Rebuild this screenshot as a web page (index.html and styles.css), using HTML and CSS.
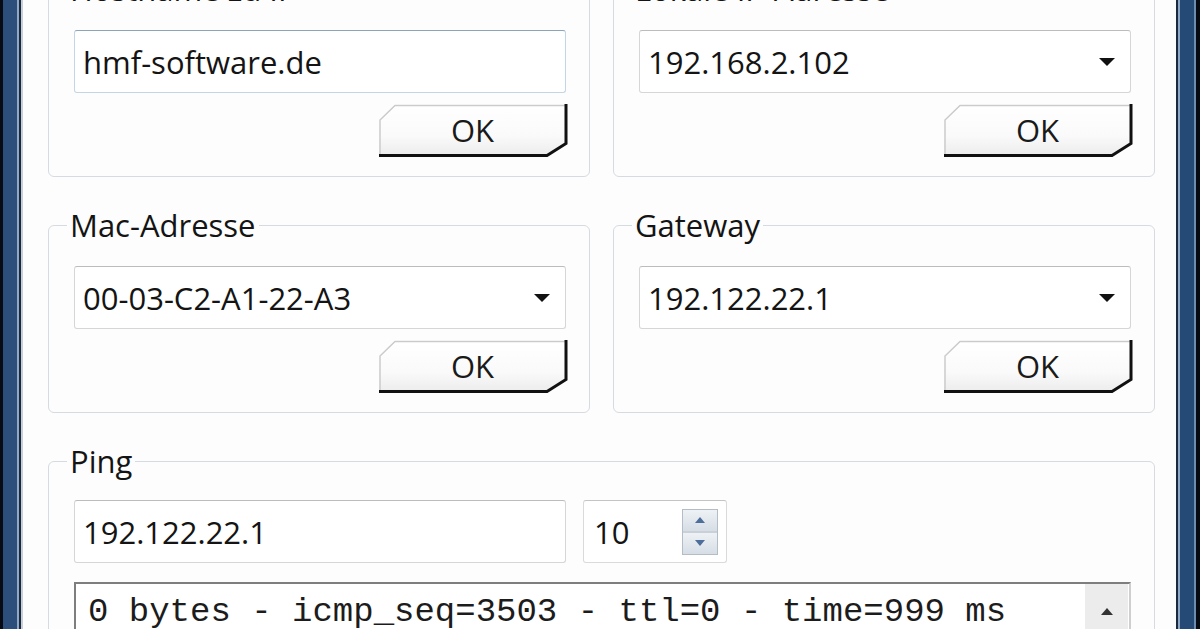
FILE: index.html
```html
<!DOCTYPE html>
<html lang="de">
<head>
<meta charset="utf-8">
<title>Netzwerk</title>
<link rel="stylesheet" href="styles.css">
</head>
<body>
<div class="window">
  <div class="frame frame-left"></div>
  <main class="client">
    <div class="grid">
      <fieldset class="group">
        <legend>Hostname zu IP</legend>
        <div class="field edit focus">hmf-software.de</div>
        <div class="actions">
          <button class="ok" type="button">
            <svg class="ok-shape" viewBox="0 0 189 53"><defs><linearGradient id="g1" x1="0" y1="0" x2="0" y2="1"><stop offset="0" stop-color="#ffffff"/><stop offset="0.6" stop-color="#fafafa"/><stop offset="1" stop-color="#ebebeb"/></linearGradient></defs><polygon points="0,16 16,0 189,0 189,40 168,53 0,53" fill="url(#g1)"/><polyline points="1,53 1,16 16,1.5 186,1.5" fill="none" stroke="#cbcbcb" stroke-width="1.5"/><polyline points="187,0 187,39.5 168,51.5 0,51.5" fill="none" stroke="#111" stroke-width="3"/></svg>
            <span>OK</span>
          </button>
        </div>
      </fieldset>
      <fieldset class="group">
        <legend>Lokale IP-Adresse</legend>
        <div class="field combo"><span>192.168.2.102</span><svg class="drop" viewBox="0 0 16 8"><polygon points="0,0 16,0 8,8" fill="#111"/></svg></div>
        <div class="actions">
          <button class="ok" type="button">
            <svg class="ok-shape" viewBox="0 0 189 53"><polygon points="0,16 16,0 189,0 189,40 168,53 0,53" fill="url(#g1)"/><polyline points="1,53 1,16 16,1.5 186,1.5" fill="none" stroke="#cbcbcb" stroke-width="1.5"/><polyline points="187,0 187,39.5 168,51.5 0,51.5" fill="none" stroke="#111" stroke-width="3"/></svg>
            <span>OK</span>
          </button>
        </div>
      </fieldset>
      <fieldset class="group">
        <legend>Mac-Adresse</legend>
        <div class="field combo"><span>00-03-C2-A1-22-A3</span><svg class="drop" viewBox="0 0 16 8"><polygon points="0,0 16,0 8,8" fill="#111"/></svg></div>
        <div class="actions">
          <button class="ok" type="button">
            <svg class="ok-shape" viewBox="0 0 189 53"><polygon points="0,16 16,0 189,0 189,40 168,53 0,53" fill="url(#g1)"/><polyline points="1,53 1,16 16,1.5 186,1.5" fill="none" stroke="#cbcbcb" stroke-width="1.5"/><polyline points="187,0 187,39.5 168,51.5 0,51.5" fill="none" stroke="#111" stroke-width="3"/></svg>
            <span>OK</span>
          </button>
        </div>
      </fieldset>
      <fieldset class="group">
        <legend>Gateway</legend>
        <div class="field combo"><span>192.122.22.1</span><svg class="drop" viewBox="0 0 16 8"><polygon points="0,0 16,0 8,8" fill="#111"/></svg></div>
        <div class="actions">
          <button class="ok" type="button">
            <svg class="ok-shape" viewBox="0 0 189 53"><polygon points="0,16 16,0 189,0 189,40 168,53 0,53" fill="url(#g1)"/><polyline points="1,53 1,16 16,1.5 186,1.5" fill="none" stroke="#cbcbcb" stroke-width="1.5"/><polyline points="187,0 187,39.5 168,51.5 0,51.5" fill="none" stroke="#111" stroke-width="3"/></svg>
            <span>OK</span>
          </button>
        </div>
      </fieldset>
    </div>
    <fieldset class="group ping">
      <legend>Ping</legend>
      <div class="ping-row">
        <div class="field edit host">192.122.22.1</div>
        <div class="field spin">
          <span>10</span>
          <div class="spin-btns">
            <div class="spin-btn"><svg viewBox="0 0 10 6"><polygon points="0,6 10,6 5,0" fill="#4d6d9a"/></svg></div>
            <div class="spin-btn"><svg viewBox="0 0 10 6"><polygon points="0,0 10,0 5,6" fill="#4d6d9a"/></svg></div>
          </div>
        </div>
      </div>
      <div class="output">
        <div class="log">0 bytes - icmp_seq=3503 - ttl=0 - time=999 ms</div>
        <div class="scrollbar">
          <svg class="sb-arrow" viewBox="0 0 12 7"><polygon points="0,7 12,7 6,0" fill="#333"/></svg>
        </div>
      </div>
    </fieldset>
  </main>
  <div class="frame frame-right"></div>
</div>
</body>
</html>
```

FILE: styles.css
```css
html, body {
  margin: 0;
  height: 100%;
  overflow: hidden;
  background: #fdfdfd;
}

.window {
  display: flex;
  height: 629px;
  overflow: hidden;
}

.frame {
  flex: none;
}

.frame-left {
  width: 23px;
  background: linear-gradient(to right, #070b14 0 3px, #2c4e7a 3px 17px, #8fa8c6 17px 19px, #1a2840 19px 21px, #c9cfd6 21px 23px);
}

.frame-right {
  width: 24px;
  background: linear-gradient(to right, #1a2840 0 2px, #8fa8c6 2px 4px, #254a75 4px 18px, #6d8cb2 18px 20px, #070b14 20px 24px);
}

.client {
  flex: 1;
  min-width: 0;
  padding: 0 21px 0 25px;
  display: flex;
  flex-direction: column;
  gap: 30px;
  font-family: "Open Sans", "Noto Sans", sans-serif;
  color: #141414;
}

.grid {
  display: grid;
  grid-template-columns: 1fr 1fr;
  column-gap: 23px;
  row-gap: 30px;
  margin-top: -29px;
}

.group {
  margin: 0;
  min-width: 0;
  border: 1px solid #d5dbe0;
  border-radius: 6px;
  padding: 23px 23px 19px 25px;
}

.group legend {
  font-size: 31px;
  line-height: 36px;
  padding: 0 3px;
  margin-left: -7px;
  color: #141414;
}

.field {
  height: 63px;
  box-sizing: border-box;
  border: 1px solid #d6d6d6;
  border-top-color: #bcbcbc;
  border-radius: 3px;
  background: #fff;
  display: flex;
  align-items: center;
  padding: 0 15px 0 8px;
  font-size: 31px;
  white-space: nowrap;
}

.field.focus {
  border-color: #c3d6e6;
  border-top-color: #8aa4ba;
}

.combo {
  justify-content: space-between;
}

.drop {
  width: 16px;
  height: 8px;
  flex: none;
}

.actions {
  display: flex;
  justify-content: flex-end;
  margin-top: 11px;
  margin-right: -2px;
}

.ok {
  width: 189px;
  height: 53px;
  display: grid;
  padding: 0;
  border: 0;
  background: none;
  font-family: "Open Sans", "Noto Sans", sans-serif;
  font-size: 31px;
  color: #1a1a1a;
}

.ok > * {
  grid-area: 1 / 1;
}

.ok-shape {
  width: 189px;
  height: 53px;
}

.ok span {
  align-self: center;
  justify-self: center;
  line-height: 1;
  margin-left: -2px;
}

.group.ping {
  padding-top: 21px;
  padding-bottom: 0;
}

.ping-row {
  display: flex;
  gap: 17px;
}

.host {
  width: 492px;
}

.spin {
  width: 144px;
  justify-content: space-between;
  padding: 0 8px 0 10px;
  border-color: #dadada;
  border-top-color: #c4c4c4;
}

.spin-btns {
  width: 36px;
  height: 46px;
  display: flex;
  flex-direction: column;
  border: 1px solid #b4bcc6;
  box-sizing: border-box;
  background: #c9d0d8;
  gap: 2px;
}

.spin-btn {
  flex: 1;
  display: flex;
  align-items: center;
  justify-content: center;
  background: linear-gradient(#eef2f6, #d6dde5);
}

.spin-btn svg {
  width: 10px;
  height: 6px;
}

.output {
  margin-top: 19px;
  width: 1057px;
  height: 140px;
  box-sizing: border-box;
  border: 2px solid #7e7e7e;
  border-right-color: #cfcfcf;
  display: flex;
  background: #fff;
}

.log {
  flex: 1;
  padding: 8px 0 0 12px;
  font-family: "Liberation Mono", "DejaVu Sans Mono", monospace;
  font-size: 34px;
  line-height: 40px;
  color: #1c1c1c;
  white-space: pre;
}

.scrollbar {
  width: 43px;
  margin-right: 1px;
  background: #ececec;
  display: flex;
  justify-content: center;
  padding-top: 24px;
}

.sb-arrow {
  width: 12px;
  height: 7px;
}
```
